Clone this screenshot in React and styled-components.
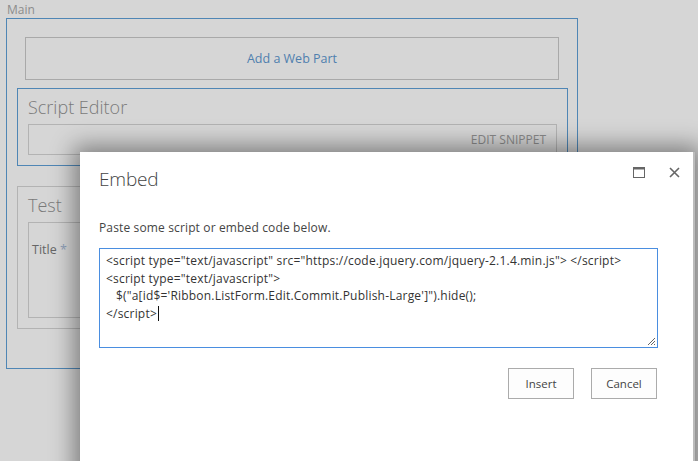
import React from "react";
import styled, { createGlobalStyle } from "styled-components";

const Global = createGlobalStyle`
  html, body { margin: 0; padding: 0; }
  body {
    background: #d6d6d6;
    font-family: "Open Sans", "Noto Sans", sans-serif;
    width: 698px; height: 461px; overflow: hidden;
  }
`;

const Page = styled.div`
  position: relative;
  width: 698px;
  height: 461px;
  padding: 2px 0 0 6px;
  box-sizing: border-box;
  overflow: hidden;
`;

const ZoneLabel = styled.div`
  font-size: 12px;
  line-height: 16px;
  color: #8c8c8c;
  padding-left: 1px;
`;

const Zone = styled.div`
  width: 572px;
  height: 351px;
  box-sizing: border-box;
  border: 1px solid #4f86b5;
  padding: 18px 0 0 10px;
  display: flex;
  flex-direction: column;
  gap: 8px;
`;

const AddPart = styled.div`
  margin-left: 8px;
  width: 534px;
  height: 43px;
  box-sizing: border-box;
  border: 1px solid #a9a9a9;
  display: flex;
  align-items: center;
  justify-content: center;
  font-size: 12.5px;
  color: #4f7fae;
`;

const WebPart = styled.div`
  width: 551px;
  height: ${(p) => p.$h}px;
  box-sizing: border-box;
  border: 1px solid ${(p) => (p.$selected ? "#4f86b5" : "#b3b3b3")};
  padding: 0 10px;
  margin-top: ${(p) => p.$mt || 0}px;
`;

const PartTitle = styled.div`
  font-size: 18px;
  font-weight: 300;
  color: #7a7a7a;
  line-height: 22px;
  height: 35px;
  padding-top: 7px;
  box-sizing: border-box;
`;

const PartBody = styled.div`
  width: 529px;
  height: ${(p) => p.$h}px;
  box-sizing: border-box;
  border: 1px solid #b3b3b3;
  display: flex;
  align-items: ${(p) => (p.$top ? "flex-start" : "center")};
  justify-content: ${(p) => (p.$right ? "flex-end" : "flex-start")};
  padding: ${(p) => (p.$top ? "18px 0 0 3px" : "0 10px")};
`;

const SnippetLink = styled.span`
  font-size: 12px;
  color: #8a8a8a;
`;

const FieldLabel = styled.span`
  font-size: 12.5px;
  color: #666;
  & b { font-weight: normal; color: #8f9fb8; }
`;

const Dialog = styled.div`
  position: absolute;
  left: 80px;
  top: 152px;
  width: 615px;
  height: 400px;
  background: #fff;
  box-shadow: 0 0 22px 6px rgba(0, 0, 0, 0.42);
  border-right: 2px solid #bcbcbc;
  box-sizing: border-box;
  padding: 0 0 0 19px;
`;

const DialogHeader = styled.div`
  display: flex;
  align-items: center;
  height: 52px;
  padding-top: 2px;
  box-sizing: border-box;
`;

const DialogTitle = styled.div`
  flex: 1;
  font-size: 19px;
  font-weight: 300;
  color: #444;
  letter-spacing: -0.2px;
`;

const HeaderButtons = styled.div`
  display: flex;
  align-items: center;
  gap: 23px;
  padding-right: 13px;
  margin-top: -14px;
`;

const IconBtn = styled.span`
  display: inline-flex;
  width: 12px;
  height: 12px;
  align-items: center;
  justify-content: center;
`;

const Instruction = styled.div`
  margin-top: 15px;
  font-size: 12px;
  color: #444;
  letter-spacing: 0.14px;
  line-height: 17px;
`;

const CodeArea = styled.div`
  position: relative;
  margin-top: 12px;
  width: 559px;
  height: 100px;
  box-sizing: border-box;
  border: 1px solid #4a8ee0;
  padding: 3px 6px;
  font-size: 12px;
  line-height: 17.5px;
  color: #333;
  letter-spacing: 0.2px;
  white-space: pre;
`;

const Caret = styled.span`
  display: inline-block;
  width: 1px;
  height: 15px;
  background: #111;
  vertical-align: -3px;
  margin-left: 1px;
`;

const Grip = styled.svg`
  position: absolute;
  right: 2px;
  bottom: 2px;
`;

const Actions = styled.div`
  display: flex;
  justify-content: flex-end;
  gap: 17px;
  width: 558px;
  margin-top: 20px;
`;

const Button = styled.button`
  width: 66px;
  height: 31px;
  border: 1px solid #ababab;
  background: #fdfdfd;
  font-family: "Open Sans", "Noto Sans", sans-serif;
  font-size: 11.5px;
  color: #444;
  padding: 0;
`;

export default function App() {
  return (
    <>
      <Global />
      <Page>
        <ZoneLabel>Main</ZoneLabel>
        <Zone>
          <AddPart>Add a Web Part</AddPart>
          <WebPart $selected $h={78}>
            <PartTitle>Script Editor</PartTitle>
            <PartBody $h={31} $right>
              <SnippetLink>EDIT SNIPPET</SnippetLink>
            </PartBody>
          </WebPart>
          <WebPart $h={143} $mt={12}>
            <PartTitle>Test</PartTitle>
            <PartBody $h={96} $top>
              <FieldLabel>
                Title <b>*</b>
              </FieldLabel>
            </PartBody>
          </WebPart>
        </Zone>
        <Dialog>
          <DialogHeader>
            <DialogTitle>Embed</DialogTitle>
            <HeaderButtons>
              <IconBtn>
                <svg width="12" height="11" viewBox="0 0 12 11">
                  <rect x="0.5" y="0.5" width="11" height="10" fill="none" stroke="#666" />
                  <rect x="0" y="0" width="12" height="2.5" fill="#666" />
                </svg>
              </IconBtn>
              <IconBtn>
                <svg width="11" height="11" viewBox="0 0 11 11">
                  <path d="M1 1 L10 10 M10 1 L1 10" stroke="#666" strokeWidth="1.6" />
                </svg>
              </IconBtn>
            </HeaderButtons>
          </DialogHeader>
          <Instruction>Paste some script or embed code below.</Instruction>
          <CodeArea>
            {'<script type="text/javascript" src="https://code.jquery.com/jquery-2.1.4.min.js"> </script>\n<script type="text/javascript">\n   $("a[id$=\'Ribbon.ListForm.Edit.Commit.Publish-Large\']").hide();\n</script>'}
            <Caret />
            <Grip width="8" height="8" viewBox="0 0 8 8">
              <path d="M8 1 L1 8 M8 4 L4 8 M8 7 L7 8" stroke="#555" strokeWidth="0.9" />
            </Grip>
          </CodeArea>
          <Actions>
            <Button>Insert</Button>
            <Button>Cancel</Button>
          </Actions>
        </Dialog>
      </Page>
    </>
  );
}
